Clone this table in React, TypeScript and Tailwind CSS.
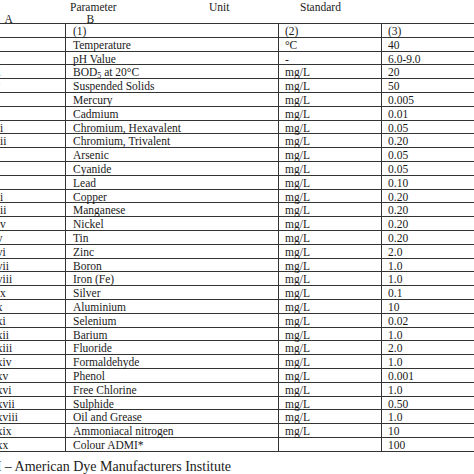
import React from "react";

const rows: [string, React.ReactNode, string, string][] = [
  ["", "(1)", "(2)", "(3)"],
  ["i", "Temperature", "°C", "40"],
  ["ii", "pH Value", "-", "6.0-9.0"],
  ["iii", <>BOD<sub className="text-[8px] align-baseline relative top-[2px]">5</sub> at 20°C</>, "mg/L", "20"],
  ["iv", "Suspended Solids", "mg/L", "50"],
  ["v", "Mercury", "mg/L", "0.005"],
  ["vi", "Cadmium", "mg/L", "0.01"],
  ["vii", "Chromium, Hexavalent", "mg/L", "0.05"],
  ["viii", "Chromium, Trivalent", "mg/L", "0.20"],
  ["ix", "Arsenic", "mg/L", "0.05"],
  ["x", "Cyanide", "mg/L", "0.05"],
  ["xi", "Lead", "mg/L", "0.10"],
  ["xii", "Copper", "mg/L", "0.20"],
  ["xiii", "Manganese", "mg/L", "0.20"],
  ["xiv", "Nickel", "mg/L", "0.20"],
  ["xv", "Tin", "mg/L", "0.20"],
  ["xvi", "Zinc", "mg/L", "2.0"],
  ["xvii", "Boron", "mg/L", "1.0"],
  ["xviii", "Iron (Fe)", "mg/L", "1.0"],
  ["xix", "Silver", "mg/L", "0.1"],
  ["xx", "Aluminium", "mg/L", "10"],
  ["xxi", "Selenium", "mg/L", "0.02"],
  ["xxii", "Barium", "mg/L", "1.0"],
  ["xxiii", "Fluoride", "mg/L", "2.0"],
  ["xxiv", "Formaldehyde", "mg/L", "1.0"],
  ["xxv", "Phenol", "mg/L", "0.001"],
  ["xxvi", "Free Chlorine", "mg/L", "1.0"],
  ["xxvii", "Sulphide", "mg/L", "0.50"],
  ["xxviii", "Oil and Grease", "mg/L", "1.0"],
  ["xxix", "Ammoniacal nitrogen", "mg/L", "10"],
  ["xxx", "Colour ADMI*", "", "100"],
];

export default function App() {
  return (
    <div
      className="w-[474px] h-[474px] overflow-hidden bg-white text-[#1a1a1a] text-[11.5px]"
      style={{ fontFamily: '"Liberation Serif", "Times New Roman", serif' }}
    >
      <div className="h-[23px] pt-[1px]">
        <div className="flex h-[12px] leading-[12px] whitespace-nowrap">
          <span className="ml-[70px] w-[139px]">Parameter</span>
          <span className="w-[91px]">Unit</span>
          <span>Standard</span>
        </div>
        <div className="flex h-[10px] leading-[11px] pt-[1px] whitespace-nowrap">
          <span className="ml-[4.5px] w-[82px]">A</span>
          <span>B</span>
        </div>
      </div>
      <div className="ml-[-20px] w-[520px] border-t border-[#333]">
        {rows.map((r, i) => (
          <div key={i} className="flex h-[13.8px] border-b border-[#333] whitespace-nowrap">
            <div className="w-[85px] h-full pl-[11px] pt-[1px] leading-[12px]">{r[0]}</div>
            <div className="w-[213px] h-full border-l border-[#333] pl-[7px] pt-[1px] leading-[12px]">{r[1]}</div>
            <div className="w-[103px] h-full border-l border-[#333] pl-[6px] pt-[1px] leading-[12px]">{r[2]}</div>
            <div className="flex-1 h-full border-l border-[#333] pl-[6px] pt-[1px] leading-[12px]">{r[3]}</div>
          </div>
        ))}
      </div>
      <div className="ml-[-43px] mt-[7px] text-[14px] leading-[16px] whitespace-nowrap">
        *ADMI – American Dye Manufacturers Institute
      </div>
    </div>
  );
}
